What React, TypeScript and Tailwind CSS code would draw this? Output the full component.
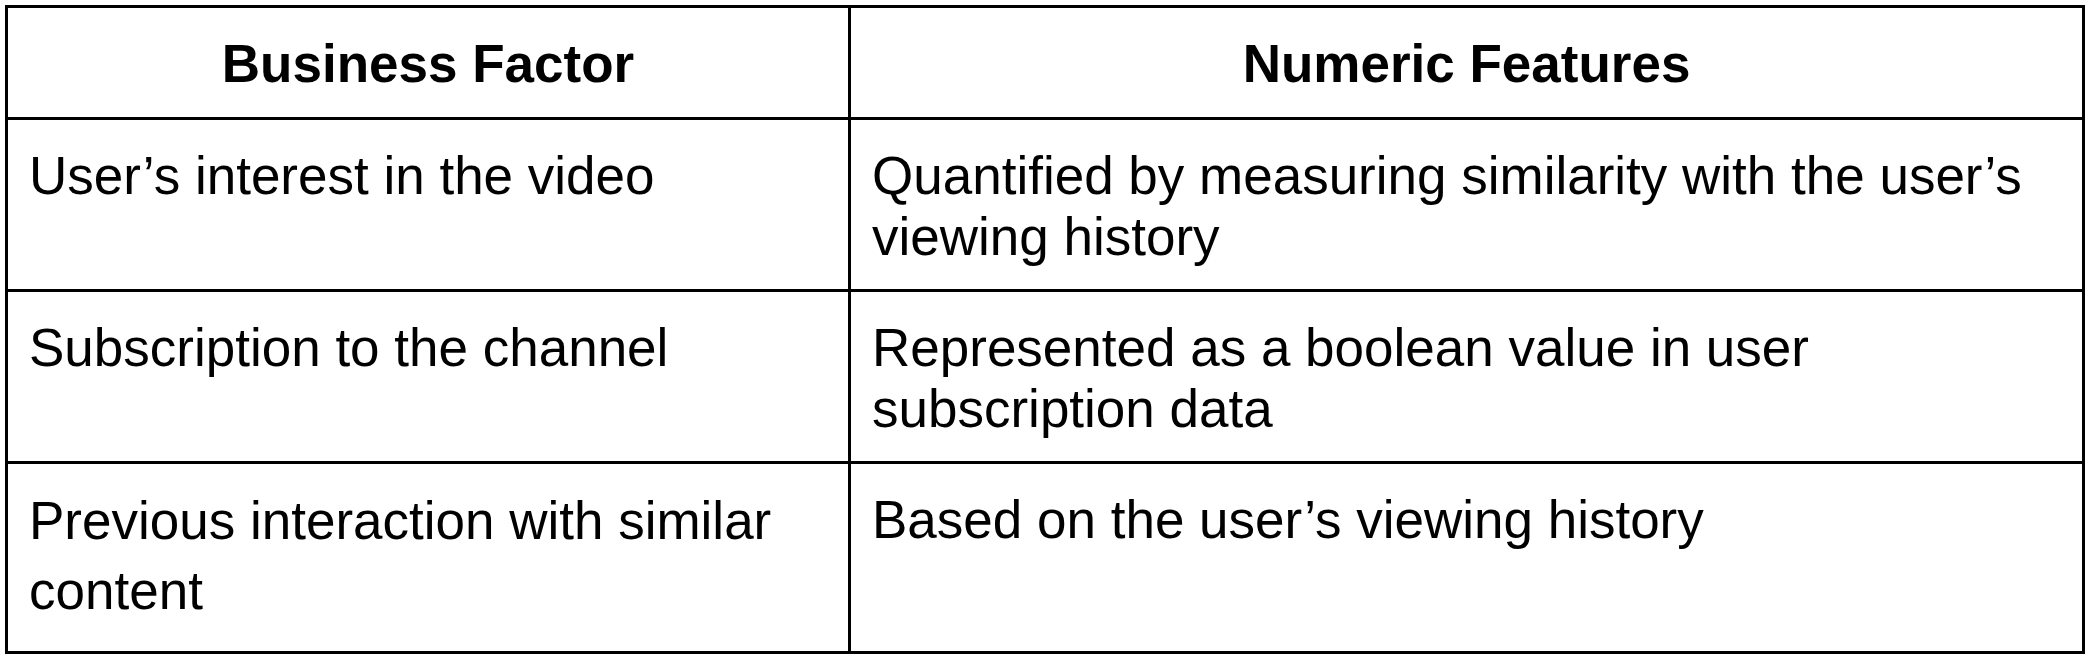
const ROWS = [
  {
    factor: "User’s interest in the video",
    feature: "Quantified by measuring similarity with the user’s viewing history",
    height: "h-[172px]",
    factorClass: "pt-[25px] leading-[61px]",
  },
  {
    factor: "Subscription to the channel",
    feature: "Represented as a boolean value in user subscription data",
    height: "h-[172px]",
    factorClass: "pt-[25px] leading-[61px]",
  },
  {
    factor: "Previous interaction with similar content",
    feature: "Based on the user’s viewing history",
    height: "h-[187px]",
    factorClass: "pt-[22px] leading-[70px]",
  },
];

export default function App() {
  return (
    <div
      className="bg-white w-[2094px] h-[664px] pl-[5px] pt-[5px] text-black"
      style={{ fontFamily: '"Liberation Sans", Arial, sans-serif' }}
    >
      <div className="w-[2080px] border-[3px] border-black flex flex-col">
        {/* Header */}
        <div className="flex h-[112px] border-b-[3px] border-black text-[53px] font-bold leading-[61px]">
          <div className="w-[843px] border-r-[3px] border-black pt-[25px] text-center">
            Business Factor
          </div>
          <div className="flex-1 pt-[25px] text-center">Numeric Features</div>
        </div>

        {/* Body */}
        {ROWS.map((row, i) => (
          <div
            key={row.factor}
            className={`flex text-[53px] ${row.height} ${
              i < ROWS.length - 1 ? "border-b-[3px] border-black" : ""
            }`}
          >
            <div
              className={`w-[843px] border-r-[3px] border-black pl-[21px] pr-[21px] ${row.factorClass}`}
            >
              {row.factor}
            </div>
            <div className="flex-1 pl-[21px] pr-[21px] pt-[25px] leading-[61px]">
              {row.feature}
            </div>
          </div>
        ))}
      </div>
    </div>
  );
}
